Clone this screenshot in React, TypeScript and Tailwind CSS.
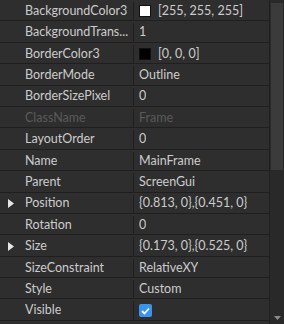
import React from "react";

type Prop = {
  name: string;
  value: string;
  expandable?: boolean;
  disabled?: boolean;
  swatch?: string;
  check?: boolean;
};

const props: Prop[] = [
  { name: "BackgroundColor3", value: "[255, 255, 255]", swatch: "#ffffff" },
  { name: "BackgroundTrans...", value: "1" },
  { name: "BorderColor3", value: "[0, 0, 0]", swatch: "#000000" },
  { name: "BorderMode", value: "Outline" },
  { name: "BorderSizePixel", value: "0" },
  { name: "ClassName", value: "Frame", disabled: true },
  { name: "LayoutOrder", value: "0" },
  { name: "Name", value: "MainFrame" },
  { name: "Parent", value: "ScreenGui" },
  { name: "Position", value: "{0.813, 0},{0.451, 0}", expandable: true },
  { name: "Rotation", value: "0" },
  { name: "Size", value: "{0.173, 0},{0.525, 0}", expandable: true },
  { name: "SizeConstraint", value: "RelativeXY" },
  { name: "Style", value: "Custom" },
  { name: "Visible", value: "", check: true },
];

function Row({ p }: { p: Prop }) {
  const text = p.disabled ? "text-[#5a5a5a]" : "text-[#cccccc]";
  return (
    <div className="flex h-[21.4px] border-b border-[#1f1f1f] pt-[2px]">
      <div className="flex w-[134px] shrink-0 items-center border-r border-[#1f1f1f]">
        <div className="flex w-[25px] shrink-0 items-center justify-center pr-[4px]">
          {p.expandable && (
            <svg width="6" height="9" viewBox="0 0 6 9">
              <path d="M0 0 L6 4.5 L0 9 Z" fill="#e6e6e6" />
            </svg>
          )}
        </div>
        <span className={`overflow-hidden whitespace-nowrap ${text}`}>{p.name}</span>
      </div>
      <div className="flex min-w-0 flex-1 items-center pl-[5px]">
        {p.swatch && (
          <div
            className="mr-[7px] h-[12px] w-[12px] shrink-0 border border-[#111111]"
            style={{ backgroundColor: p.swatch }}
          />
        )}
        {p.check ? (
          <div className="flex h-[13px] w-[13px] shrink-0 items-center justify-center rounded-[2px] bg-[#3a94ec]">
            <svg width="9" height="8" viewBox="0 0 9 8">
              <path d="M1 4 L3.5 6.5 L8 1.5" fill="none" stroke="#ffffff" strokeWidth="1.8" />
            </svg>
          </div>
        ) : (
          <span className={`overflow-hidden whitespace-nowrap ${text}`}>{p.value}</span>
        )}
      </div>
    </div>
  );
}

export default function App() {
  return (
    <div
      className="flex h-[324px] w-[284px] overflow-hidden bg-[#2e2e2e] text-[12.5px]"
      style={{ fontFamily: 'Lato, "Noto Sans", sans-serif' }}
    >
      <div className="flex min-w-0 flex-1 flex-col">
        {props.map((p) => (
          <Row key={p.name} p={p} />
        ))}
      </div>
      <div className="flex w-[15px] shrink-0 flex-col border-l border-[#1f1f1f] bg-[#292929]">
        <div className="mx-[1px] mt-[3px] h-[167px] bg-[#3b3b3b]" />
        <div className="flex-1" />
        <div className="flex h-[12px] items-center justify-center">
          <svg width="7" height="4" viewBox="0 0 7 4">
            <path d="M0 0 L7 0 L3.5 4 Z" fill="#8a8a8a" />
          </svg>
        </div>
      </div>
    </div>
  );
}
